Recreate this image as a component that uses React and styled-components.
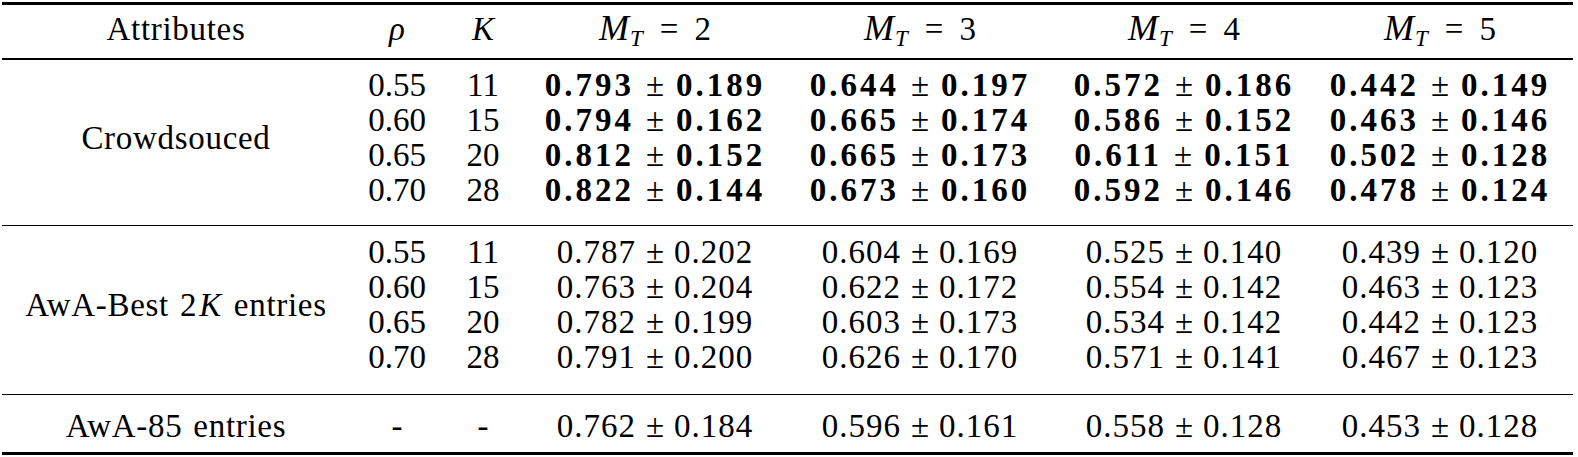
import React from "react";
import styled, { createGlobalStyle } from "styled-components";

const GlobalStyle = createGlobalStyle`
  html, body {
    margin: 0;
    padding: 0;
    background: #fff;
  }
  body {
    font-family: "Liberation Serif", "Times New Roman", "DejaVu Serif", serif;
    color: #000;
  }
`;

const COLS = "348px 94px 78px 266px 264px 264px 248px";

const groups = [
  {
    name: "Crowdsouced",
    bold: true,
    pad: "8px 0 17px",
    rows: [
      ["0.55", "11", "0.793", "0.189", "0.644", "0.197", "0.572", "0.186", "0.442", "0.149"],
      ["0.60", "15", "0.794", "0.162", "0.665", "0.174", "0.586", "0.152", "0.463", "0.146"],
      ["0.65", "20", "0.812", "0.152", "0.665", "0.173", "0.611", "0.151", "0.502", "0.128"],
      ["0.70", "28", "0.822", "0.144", "0.673", "0.160", "0.592", "0.146", "0.478", "0.124"],
    ],
  },
  {
    name: "best",
    pad: "9px 0 19px",
    rows: [
      ["0.55", "11", "0.787", "0.202", "0.604", "0.169", "0.525", "0.140", "0.439", "0.120"],
      ["0.60", "15", "0.763", "0.204", "0.622", "0.172", "0.554", "0.142", "0.463", "0.123"],
      ["0.65", "20", "0.782", "0.199", "0.603", "0.173", "0.534", "0.142", "0.442", "0.123"],
      ["0.70", "28", "0.791", "0.200", "0.626", "0.170", "0.571", "0.141", "0.467", "0.123"],
    ],
  },
];

const last = ["-", "-", "0.762", "0.184", "0.596", "0.161", "0.558", "0.128", "0.453", "0.128"];

const Stat = ({ mean, sd, bold }) => (
  <Num $bold={bold}>
    {mean}
    <Pm $bold={bold}>±</Pm>
    {sd}
  </Num>
);

const MHead = ({ n }) => (
  <Cell>
    <BigIt>M</BigIt>
    <Sub>T</Sub>
    <Eq>=</Eq>
    {n}
  </Cell>
);

const GroupLabel = ({ name }) =>
  name === "best" ? (
    <Label $span={4}>
      AwA-Best 2<MathK>K</MathK>entries
    </Label>
  ) : (
    <Label $span={4}>{name}</Label>
  );

export default function App() {
  return (
    <>
      <GlobalStyle />
      <Table>
        <Section $rows="48px" $pad="0 0 5px" $rule={2}>
          <Label>Attributes</Label>
          <Cell>
            <It>ρ</It>
          </Cell>
          <Cell>
            <It>K</It>
          </Cell>
          <MHead n="2" />
          <MHead n="3" />
          <MHead n="4" />
          <MHead n="5" />
        </Section>
        {groups.map((g) => (
          <Section key={g.name} $rows="35px" $pad={g.pad} $rule={1.5}>
            <GroupLabel name={g.name} />
            {g.rows.map((r) => (
              <React.Fragment key={r[0]}>
                <Cell>{r[0]}</Cell>
                <Cell>{r[1]}</Cell>
                {[2, 4, 6, 8].map((i) => (
                  <Cell key={i}>
                    <Stat mean={r[i]} sd={r[i + 1]} bold={g.bold} />
                  </Cell>
                ))}
              </React.Fragment>
            ))}
          </Section>
        ))}
        <Section $rows="35px" $pad="14px 0 7.5px">
          <Label>AwA-85 entries</Label>
          <Cell>{last[0]}</Cell>
          <Cell>{last[1]}</Cell>
          {[2, 4, 6, 8].map((i) => (
            <Cell key={i}>
              <Stat mean={last[i]} sd={last[i + 1]} />
            </Cell>
          ))}
        </Section>
      </Table>
    </>
  );
}

const Table = styled.div`
  margin: 2px 0 0 2px;
  width: 1571px;
  border-top: 3px solid #000;
  border-bottom: 3px solid #000;
`;

const Section = styled.div`
  display: grid;
  grid-template-columns: ${COLS};
  grid-auto-rows: ${(p) => p.$rows};
  align-items: center;
  padding: ${(p) => p.$pad};
  border-bottom: ${(p) => (p.$rule ? `${p.$rule}px solid #000` : "none")};
`;

const Cell = styled.div`
  font-family: "Liberation Serif", "Times New Roman", "DejaVu Serif", serif;
  text-align: center;
  font-size: 33px;
  line-height: 35px;
  white-space: nowrap;
`;

const Label = styled(Cell)`
  grid-row: ${(p) => (p.$span ? `span ${p.$span}` : "auto")};
  grid-column: 1;
  letter-spacing: 0.7px;
  word-spacing: 2px;
`;

const It = styled.i`
  font-style: italic;
`;

const BigIt = styled.i`
  font-style: italic;
  font-size: 36px;
`;

const MathK = styled.i`
  font-style: italic;
  margin: 0 12px 0 2px;
`;

const Sub = styled.sub`
  font-style: italic;
  font-size: 23px;
  vertical-align: -6px;
  line-height: 0;
  margin-left: 1px;
`;

const Eq = styled.span`
  margin: 0 16px 0 17px;
`;

const Num = styled.span`
  font-weight: ${(p) => (p.$bold ? 700 : 400)};
  letter-spacing: ${(p) => (p.$bold ? "3px" : "1px")};
`;

const Pm = styled.span`
  font-weight: 400;
  letter-spacing: 0;
  margin: 0 ${(p) => (p.$bold ? "12px" : "10px")};
`;
